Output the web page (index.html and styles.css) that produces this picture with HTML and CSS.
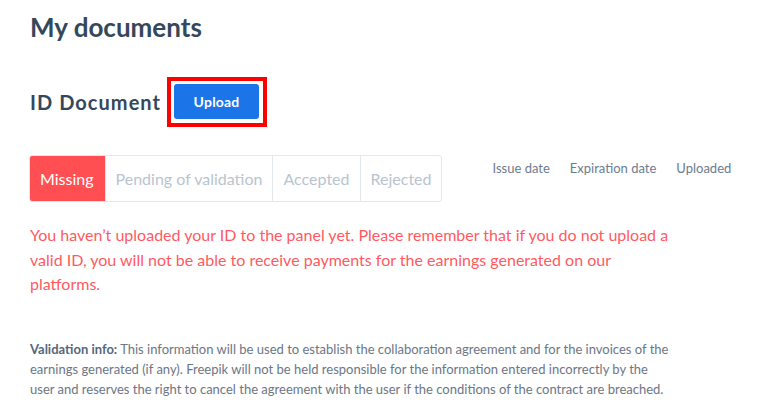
FILE: index.html
```html
<!DOCTYPE html>
<html lang="en">
<head>
<meta charset="utf-8">
<title>My documents</title>
<link rel="stylesheet" href="styles.css">
</head>
<body>
<main class="page">
  <h1 class="title">My documents</h1>
  <div class="doc-head">
    <h2 class="doc-title">ID Document</h2>
    <div class="highlight">
      <button class="upload-btn" type="button">Upload</button>
    </div>
  </div>
  <div class="status-row">
    <div class="tabs">
      <span class="tab tab-active">Missing</span>
      <span class="tab">Pending of validation</span>
      <span class="tab">Accepted</span>
      <span class="tab">Rejected</span>
    </div>
    <div class="cols">
      <span class="col">Issue date</span>
      <span class="col">Expiration date</span>
      <span class="col">Uploaded</span>
    </div>
  </div>
  <p class="warning">You haven’t uploaded your ID to the panel yet. Please remember that if you do not upload a valid ID, you will not be able to receive payments for the earnings generated on our platforms.</p>
  <p class="info"><strong>Validation info:</strong> This information will be used to establish the collaboration agreement and for the invoices of the earnings generated (if any). Freepik will not be held responsible for the information entered incorrectly by the<br>user and reserves the right to cancel the agreement with the user if the conditions of the contract are breached.</p>
</main>
</body>
</html>
```
FILE: styles.css
```css
* { box-sizing: border-box; }
html, body { margin: 0; padding: 0; background: #fff; }
body {
  font-family: "Lato", "Liberation Sans", sans-serif;
  color: #374a5e;
}
.page {
  padding: 11px 0 0 30px;
  width: 759px;
}
.title {
  margin: 0;
  font-size: 26px;
  line-height: 32px;
  font-weight: 700;
  color: #34485c;
}
.doc-head {
  display: flex;
  align-items: center;
  gap: 6px;
  margin-top: 34px;
}
.doc-title {
  margin: 0;
  font-size: 20px;
  line-height: 26px;
  letter-spacing: 1.05px;
  font-weight: 700;
  color: #34485c;
}
.highlight {
  border: 4px solid #ff0000;
  padding: 3px;
  width: 100px;
  height: 50px;
}
.upload-btn {
  display: block;
  width: 85px;
  height: 35px;
  border: 0;
  border-radius: 3px;
  background: #1b74e8;
  color: #fff;
  font-family: inherit;
  font-size: 14px;
  font-weight: 700;
  letter-spacing: 0.2px;
  padding: 0;
}
.status-row {
  display: flex;
  align-items: flex-start;
  margin-top: 28px;
  margin-left: -1px;
}
.tabs {
  display: flex;
  height: 47px;
  border: 1px solid #e3e8ed;
  border-radius: 3px;
  overflow: hidden;
}
.tab {
  display: flex;
  align-items: center;
  padding: 0 10px;
  font-size: 16px;
  color: #b9c4d0;
  border-left: 1px solid #e3e8ed;
}
.tab:first-child { border-left: 0; }
.tab-active {
  background: #ff4f52;
  color: #fff;
  margin: -1px 0 -1px -1px;
  padding: 0 11px;
}
.cols {
  display: flex;
  gap: 20px;
  margin-left: 50px;
  padding-top: 5px;
}
.col {
  font-size: 13px;
  line-height: 16px;
  color: #6d7b8f;
}
.warning {
  margin: 21px 0 0;
  width: 650px;
  font-size: 16px;
  line-height: 24.5px;
  color: #ff5a5f;
}
.info {
  margin: 42px 0 0;
  width: 650px;
  font-size: 13px;
  line-height: 20px;
  color: #6b7686;
}
.info strong { color: #56667a; }
```
